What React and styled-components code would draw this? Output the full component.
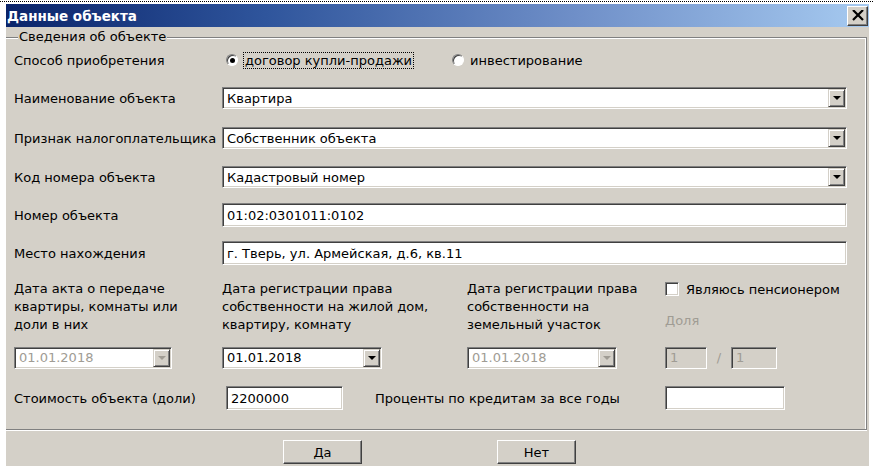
import React from "react";
import styled, { createGlobalStyle } from "styled-components";

const GlobalStyle = createGlobalStyle`
  html, body {
    margin: 0;
    padding: 0;
    background: #ffffff;
  }
  body {
    font-family: "DejaVu Sans", "Liberation Sans", sans-serif;
    font-size: 13px;
    color: #000;
  }
`;

const Page = styled.div`
  width: 873px;
  height: 473px;
  padding-top: 1px;
  box-sizing: border-box;
  overflow: hidden;
`;

const Dots = styled.div`
  height: 0;
  border-top: 1px dotted #000;
  margin-bottom: 2px;
`;

const Window = styled.div`
  margin-left: 6px;
  width: 863px;
  display: flex;
  flex-direction: column;
`;

const TitleBar = styled.div`
  height: 23px;
  display: flex;
  align-items: center;
  justify-content: space-between;
  padding: 0 1px 0 1px;
  background: linear-gradient(to right, #0a246a 0%, #2f559c 30%, #6f8fc8 66%, #a6caf0 100%);
`;

const Title = styled.div`
  color: #fff;
  font-weight: bold;
  font-size: 13.5px;
`;

const CloseButton = styled.div`
  width: 21px;
  height: 20px;
  background: #d4d0c8;
  box-sizing: border-box;
  border-top: 1px solid #fff;
  border-left: 1px solid #fff;
  border-right: 1px solid #404040;
  border-bottom: 1px solid #404040;
  box-shadow: inset -1px -1px 0 #808080;
  display: flex;
  align-items: center;
  justify-content: center;
`;

const Body = styled.div`
  background: #d4d0c8;
  height: 439px;
  display: flex;
  flex-direction: column;
`;

const Group = styled.fieldset`
  margin: 3px 2px 0 0;
  padding: 0 0 0 8px;
  height: 400px;
  box-sizing: border-box;
  border: 1px solid #808080;
  border-left: none;
  box-shadow: inset 0 1px 0 #fff, inset -1px 0 0 #fff, 0 1px 0 #fff;
  min-width: 0;
`;

const Legend = styled.legend`
  position: relative;
  background: #d4d0c8;
  padding: 0 1px 0 1px;
  margin-left: 4px;
  font-size: 13px;
  line-height: 14px;
`;

const Row = styled.div`
  display: flex;
  align-items: center;
  height: ${(p) => p.$h}px;
  margin-top: ${(p) => p.$mt || 0}px;
`;

const Label = styled.div`
  width: ${(p) => p.$w || 208}px;
  padding-left: ${(p) => p.$pl || 0}px;
  box-sizing: border-box;
  flex: none;
  white-space: nowrap;
  color: ${(p) => (p.$disabled ? "#a09c94" : "#000")};
`;

const Radio = styled.span`
  width: 12px;
  height: 12px;
  border-radius: 50%;
  box-sizing: border-box;
  background: #fff;
  border: 1px solid;
  border-color: #808080 #fff #fff #808080;
  box-shadow: inset 1px 1px 0 #404040;
  display: inline-flex;
  align-items: center;
  justify-content: center;
  flex: none;
  &::after {
    content: "";
    width: 5px;
    height: 5px;
    border-radius: 50%;
    background: ${(p) => (p.$checked ? "#000" : "transparent")};
  }
`;

const RadioItem = styled.div`
  display: flex;
  align-items: center;
  gap: 6px;
  margin-left: ${(p) => p.$ml || 0}px;
`;

const Focus = styled.span`
  outline: 1px dotted #000;
  outline-offset: 0;
  padding: 0 1px;
`;

const Sunken = styled.div`
  box-sizing: border-box;
  width: ${(p) => p.$w}px;
  height: ${(p) => p.$h || 22}px;
  margin-left: ${(p) => p.$ml || 0}px;
  background: ${(p) => (p.$gray ? "#d4d0c8" : "#fff")};
  border: 1px solid;
  border-color: #808080 #fff #fff #808080;
  box-shadow: inset 1px 1px 0 #404040, inset -1px -1px 0 #d4d0c8;
  display: flex;
  align-items: center;
  padding: 0 1px 0 4px;
  color: ${(p) => (p.$disabled ? "#a09c94" : "#000")};
  flex: none;
`;

const FieldText = styled.span`
  flex: 1;
  white-space: nowrap;
  overflow: hidden;
`;

const DropButton = styled.div`
  width: 17px;
  height: 18px;
  box-sizing: border-box;
  background: #d4d0c8;
  border: 1px solid;
  border-color: #d4d0c8 #404040 #404040 #d4d0c8;
  box-shadow: inset 1px 1px 0 #fff, inset -1px -1px 0 #808080;
  display: flex;
  align-items: center;
  justify-content: center;
  &::after {
    content: "";
    border-left: 4px solid transparent;
    border-right: 4px solid transparent;
    border-top: 4px solid ${(p) => (p.$disabled ? "#a09c94" : "#000")};
  }
`;

const Columns = styled.div`
  display: grid;
  grid-template-columns: 208px 245px 198px auto;
  margin-top: 15px;
`;

const Col = styled.div`
  display: flex;
  flex-direction: column;
`;

const MultiLabel = styled.div`
  line-height: 18px;
  height: 54px;
`;

const CheckRow = styled.div`
  display: flex;
  align-items: center;
  gap: 7px;
  height: 18px;
`;

const Check = styled.span`
  width: 14px;
  height: 14px;
  box-sizing: border-box;
  background: #fff;
  border: 1px solid;
  border-color: #808080 #fff #fff #808080;
  box-shadow: inset 1px 1px 0 #404040, inset -1px -1px 0 #d4d0c8;
  flex: none;
`;

const ShareLabel = styled.div`
  margin-top: 15px;
  height: 21px;
  color: #a09c94;
`;

const DateRow = styled.div`
  display: flex;
  align-items: center;
  margin-top: 12px;
  height: 23px;
`;

const Slash = styled.span`
  width: 24px;
  text-align: center;
  color: #a09c94;
`;

const Footer = styled.div`
  flex: 1;
  display: flex;
  align-items: center;
  padding: 8px 0 0 277px;
  gap: 135px;
`;

const Button = styled.div`
  width: 79px;
  height: 24px;
  box-sizing: border-box;
  background: #d4d0c8;
  border: 1px solid;
  border-color: #fff #404040 #404040 #fff;
  box-shadow: inset -1px -1px 0 #808080;
  display: flex;
  align-items: center;
  justify-content: center;
`;

const Combo = ({ w, text, disabled }) => (
  <Sunken $w={w} $disabled={disabled}>
    <FieldText>{text}</FieldText>
    <DropButton $disabled={disabled} />
  </Sunken>
);

export default function App() {
  return (
    <Page>
      <GlobalStyle />
      <Dots />
      <Window>
        <TitleBar>
          <Title>Данные объекта</Title>
          <CloseButton>
            <svg width="12" height="11" viewBox="0 0 12 11">
              <path d="M1 0 L11 10 M11 0 L1 10" stroke="#000" strokeWidth="2.2" />
            </svg>
          </CloseButton>
        </TitleBar>
        <Body>
          <Group>
            <Legend>Сведения об объекте</Legend>
            <Row $h={24} $mt={4}>
              <Label>Способ приобретения</Label>
              <RadioItem $ml={4}>
                <Radio $checked />
                <Focus>договор купли-продажи</Focus>
              </RadioItem>
              <RadioItem $ml={39}>
                <Radio />
                <span>инвестирование</span>
              </RadioItem>
            </Row>
            <Row $h={22} $mt={15}>
              <Label>Наименование объекта</Label>
              <Combo w={625} text="Квартира" />
            </Row>
            <Row $h={22} $mt={18}>
              <Label>Признак налогоплательщика</Label>
              <Combo w={625} text="Собственник объекта" />
            </Row>
            <Row $h={22} $mt={17}>
              <Label>Код номера объекта</Label>
              <Combo w={625} text="Кадастровый номер" />
            </Row>
            <Row $h={24} $mt={15}>
              <Label>Номер объекта</Label>
              <Sunken $w={625} $h={24}>
                <FieldText>01:02:0301011:0102</FieldText>
              </Sunken>
            </Row>
            <Row $h={24} $mt={14}>
              <Label>Место нахождения</Label>
              <Sunken $w={625} $h={24}>
                <FieldText>г. Тверь, ул. Армейская, д.6, кв.11</FieldText>
              </Sunken>
            </Row>
            <Columns>
              <Col>
                <MultiLabel>
                  Дата акта о передаче
                  <br />
                  квартиры, комнаты или
                  <br />
                  доли в них
                </MultiLabel>
                <DateRow>
                  <Combo w={158} text="01.01.2018" disabled />
                </DateRow>
              </Col>
              <Col>
                <MultiLabel>
                  Дата регистрации права
                  <br />
                  собственности на жилой дом,
                  <br />
                  квартиру, комнату
                </MultiLabel>
                <DateRow>
                  <Combo w={160} text="01.01.2018" />
                </DateRow>
              </Col>
              <Col>
                <MultiLabel>
                  Дата регистрации права
                  <br />
                  собственности на
                  <br />
                  земельный участок
                </MultiLabel>
                <DateRow>
                  <Combo w={150} text="01.01.2018" disabled />
                </DateRow>
              </Col>
              <Col>
                <CheckRow>
                  <Check />
                  <span>Являюсь пенсионером</span>
                </CheckRow>
                <ShareLabel>Доля</ShareLabel>
                <DateRow>
                  <Sunken $w={42} $gray $disabled>
                    <FieldText>1</FieldText>
                  </Sunken>
                  <Slash>/</Slash>
                  <Sunken $w={46} $gray $disabled>
                    <FieldText>1</FieldText>
                  </Sunken>
                </DateRow>
              </Col>
            </Columns>
            <Row $h={24} $mt={17}>
              <Label $w={212}>Стоимость объекта (доли)</Label>
              <Sunken $w={117} $h={24}>
                <FieldText>2200000</FieldText>
              </Sunken>
              <Label $w={322} $pl={32}>
                Проценты по кредитам за все годы
              </Label>
              <Sunken $w={120} $h={24} />
            </Row>
          </Group>
          <Footer>
            <Button>Да</Button>
            <Button>Нет</Button>
          </Footer>
        </Body>
      </Window>
    </Page>
  );
}
